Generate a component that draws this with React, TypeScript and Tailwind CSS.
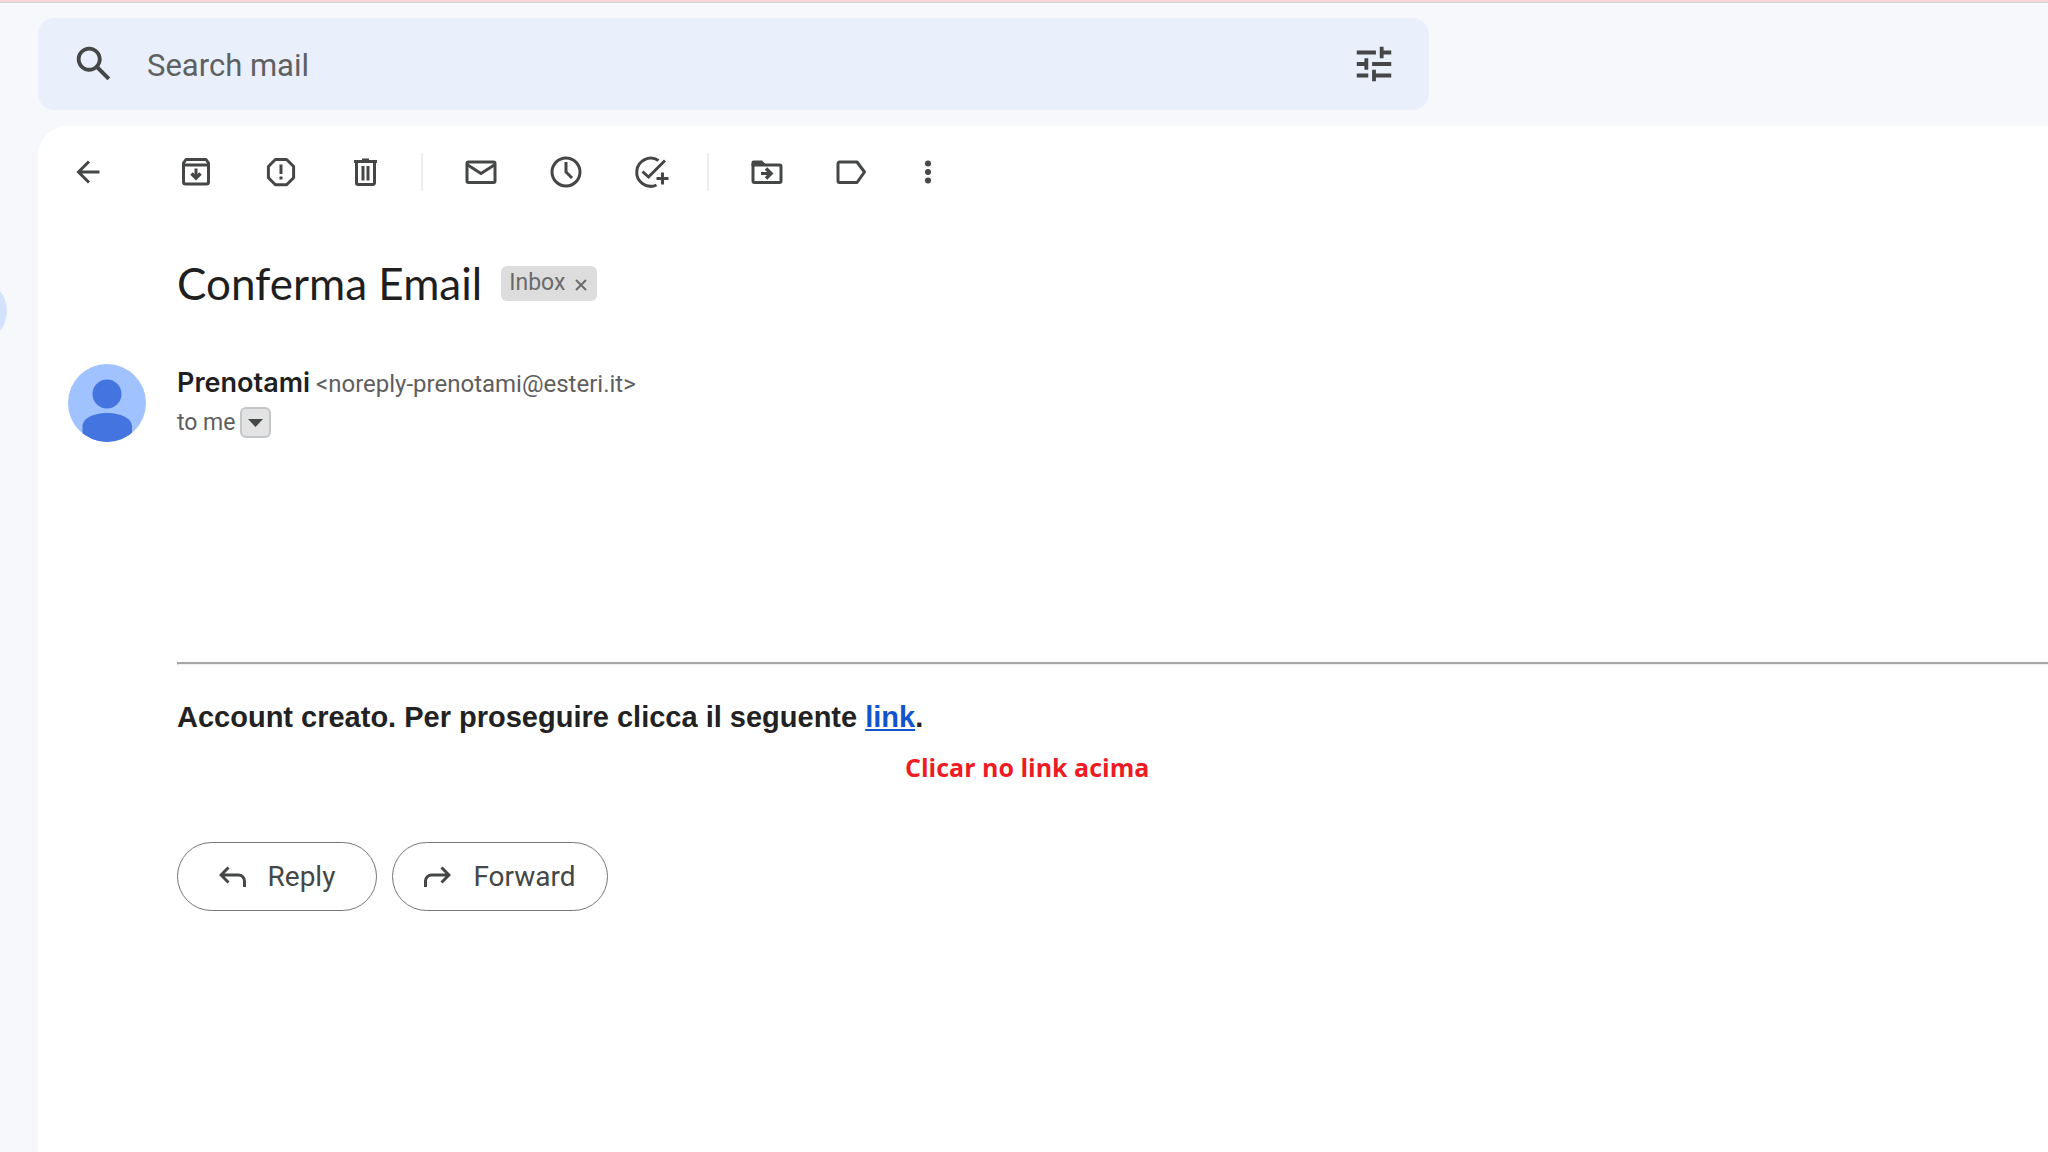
import type { ReactNode } from "react";

function Icon({ children, className = "size-9" }: { children: ReactNode; className?: string }) {
  return (
    <svg
      viewBox="0 0 36 36"
      className={`${className} overflow-visible`}
      fill="none"
      stroke="currentColor"
      strokeWidth="3"
      aria-hidden="true"
    >
      {children}
    </svg>
  );
}

function ToolButton({ label, children }: { label: string; children: ReactNode }) {
  return (
    <button type="button" aria-label={label} className="size-9 shrink-0">
      <Icon>{children}</Icon>
    </button>
  );
}

function Toolbar() {
  return (
    <div className="flex h-[92px] items-center pl-8">
      <ToolButton label="Back to inbox">
        <path d="M29.5 18H9M19 7.5 8.5 18 19 28.5" />
      </ToolButton>
      <div className="ml-[72px] flex gap-[49px]">
        <ToolButton label="Archive">
          <path d="M5.5 9v19a2 2 0 0 0 2 2h21a2 2 0 0 0 2-2V9l-2.5-3.500h-20z" strokeLinejoin="round" />
          <path d="M5.5 11h25M18 14.500v9" />
          <path d="M13.500 19.500 18 24l4.500-4.500" strokeWidth="3.500" />
        </ToolButton>
        <ToolButton label="Report spam">
          <path d="M12.400 5.500h11.200l7 7v11.200l-7 7H12.400l-7-7V12.500z" strokeLinejoin="round" />
          <path d="M18 10.500v9.500M18 22.500v3" />
        </ToolButton>
        <ToolButton label="Delete">
          <path d="M6 7.500h23M8.500 9v20a1.500 1.500 0 0 0 1.500 1.500h15a1.500 1.500 0 0 0 1.500-1.500V9M14 6h7M15 12v14.500M20 12v14.500" />
        </ToolButton>
      </div>
      <div className="ml-[37px] h-[38px] w-0.5 bg-[#eceff1]" />
      <div className="ml-10 flex gap-[49px]">
        <ToolButton label="Mark as unread">
          <rect x="4" y="8" width="28" height="20.500" rx="1.500" />
          <path d="m4 10.500 14 9 14-9" />
        </ToolButton>
        <ToolButton label="Snooze">
          <circle cx="18" cy="18" r="14" strokeWidth="3" />
          <path d="M18 8v10l6 6" />
        </ToolButton>
        <ToolButton label="Add to tasks">
          <path d="M25.500 6.600A14 14 0 1 0 23.500 31M9.500 17.500l6 5.500L32 6.500M29.500 18.500v12M23.500 24.500h12" strokeWidth="3" />
        </ToolButton>
      </div>
      <div className="ml-[38px] h-[38px] w-0.5 bg-[#eceff1]" />
      <div className="ml-10 flex gap-[49px]">
        <ToolButton label="Move to">
          <path d="M4 10v17a1.500 1.500 0 0 0 1.500 1.500h25A1.500 1.500 0 0 0 32 27V12.500a1.500 1.500 0 0 0-1.500-1.500H4" />
          <path d="M2.500 12V8.500a2 2 0 0 1 2-2H13l5 5z" fill="currentColor" stroke="none" />
          <path d="M12 19.500h9" />
          <path d="m17 14.500 5 5-5 5" strokeWidth="3.500" />
        </ToolButton>
        <ToolButton label="Labels">
          <path d="M5.500 8H23l7.500 10L23 28.500H5.500A1.500 1.500 0 0 1 4 27V9.500A1.500 1.500 0 0 1 5.500 8z" strokeLinejoin="round" />
        </ToolButton>
      </div>
      <button type="button" aria-label="More" className="ml-10 size-9 shrink-0">
        <Icon>
          <g fill="currentColor" stroke="none">
            <circle cx="18" cy="9.500" r="3" />
            <circle cx="18" cy="18" r="3" />
            <circle cx="18" cy="26.500" r="3" />
          </g>
        </Icon>
      </button>
    </div>
  );
}

function SearchBar() {
  return (
    <form role="search" className="mr-[30.800%] flex h-[92px] items-center rounded-2xl bg-[#e9f0fb] pr-8 pl-[33px]">
      <button type="button" aria-label="Search" className="size-[46px] shrink-0">
        <svg viewBox="0 0 24 24" className="size-full" fill="currentColor" aria-hidden="true">
          <path d="M20.490 19l-5.730-5.730C15.530 12.200 16 10.910 16 9.500 16 5.910 13.090 3 9.500 3S3 5.910 3 9.500 5.910 16 9.500 16c1.410 0 2.700-.47 3.770-1.240L19 20.490 20.490 19zM5 9.500C5 7.010 7.010 5 9.500 5S14 7.010 14 9.500 11.990 14 9.500 14 5 11.990 5 9.500z" />
        </svg>
      </button>
      <input
        type="text"
        aria-label="Search mail"
        placeholder="Search mail"
        className="ml-[30px] h-12 min-w-0 flex-1 bg-transparent pt-0.5 text-[31px] text-[#5e6062] outline-none placeholder:text-[#5e6062]"
      />
      <button type="button" aria-label="Show search options" className="size-[46px] shrink-0">
        <svg viewBox="0 0 24 24" className="size-full" fill="currentColor" aria-hidden="true">
          <path d="M3 17v2h6v-2H3zM3 5v2h10V5H3zm10 16v-2h8v-2h-8v-2h-2v6h2zM7 9v2H3v2h4v2h2V9H7zm14 4v-2H11v2h10zm-6-4h2V7h4V5h-4V3h-2v6z" />
        </svg>
      </button>
    </form>
  );
}

function Message() {
  return (
    <article className="grid grid-cols-[139px_1fr] text-[#5e5e5e]">
      <header className="col-start-2 mt-9 flex h-[58px] items-center">
        <h1 className="font-[Lato,sans-serif] text-[44px] leading-[56px] text-[#1f1f1f]">Conferma Email</h1>
        <span className="ml-[19px] flex h-[35px] items-center rounded-md bg-[#dddddd] pr-2.5 pl-2 text-[23px] text-[#6b6b6b]">
          Inbox
          <button type="button" aria-label="Remove label Inbox" className="ml-2.5">
            <svg viewBox="0 0 12 12" className="mt-1 size-3" stroke="currentColor" strokeWidth="2" aria-hidden="true">
              <path d="m1 1 10 10M11 1 1 11" />
            </svg>
          </button>
        </span>
      </header>

      <svg viewBox="0 0 78 78" className="mt-[52px] ml-[30px] size-[78px]" role="img" aria-label="Prenotami">
        <defs>
          <clipPath id="avatar">
            <circle cx="39" cy="39" r="39" />
          </clipPath>
        </defs>
        <g clipPath="url(#avatar)">
          <rect width="78" height="78" fill="#a0c2ff" />
          <circle cx="39" cy="30" r="14.500" fill="#4374e0" />
          <path d="M14.500 78V62.500C14.500 54 26 49 39 49s25 5 25 13.500V78z" fill="#4374e0" />
        </g>
      </svg>
      <div className="mt-[52px]">
        <p className="flex h-[39px] items-baseline gap-1.5 whitespace-nowrap text-[24px] leading-[38px]">
          <span className="font-[Inter,sans-serif] text-[27px] font-semibold text-[#1f1f1f]">Prenotami</span>
          <span>&lt;noreply-prenotami@esteri.it&gt;</span>
        </p>
        <p className="flex h-[39px] items-center gap-1 text-[23px]">
          <span className="pt-0.5">to me</span>
          <button
            type="button"
            aria-label="Show details"
            className="flex size-[31px] items-center justify-center rounded-md border-2 border-[#c4c7ca] bg-[#e3e3e3] text-[#444746]"
          >
            <svg viewBox="0 0 15 8" className="h-2 w-[15px]" fill="currentColor" aria-hidden="true">
              <path d="M0 0h15L7.500 8z" />
            </svg>
          </button>
        </p>
      </div>

      <div className="col-start-2 mt-[220px] font-['Liberation_Sans',sans-serif]">
        <hr className="h-[3px] border-t-2 border-b border-l border-t-[#a6a6a6] border-b-[#eeeeee] border-l-[#a6a6a6]" />
        <p className="mt-8 text-[29px] leading-10 font-bold text-[#222222]">
          Account creato. Per proseguire clicca il seguente{" "}
          <a href="#link" className="text-[#1155cc] underline">link</a>.
        </p>
        <p className="ml-[728px] pt-2.5 font-['Open_Sans',sans-serif] text-[25px] leading-10 font-bold text-[#ed1c24]">
          Clicar no link acima
        </p>
      </div>

      <footer className="col-start-2 mt-[55px] flex gap-[15px] text-[28px] text-[#444746]">
        <button type="button" className="flex h-[69px] w-[200px] items-center justify-center gap-[22px] rounded-full border border-[#747775]">
          <svg viewBox="0 0 27 22" className="h-[22px] w-[27px]" fill="none" stroke="currentColor" strokeWidth="3" aria-hidden="true">
            <path d="M9.500 1.500 2 9l7.500 7.500M2 9h17.500a6 6 0 0 1 6 6v6" />
          </svg>
          Reply
        </button>
        <button type="button" className="flex h-[69px] w-[216px] items-center justify-center gap-[22px] rounded-full border border-[#747775]">
          <svg viewBox="0 0 27 22" className="h-[22px] w-[27px]" fill="none" stroke="currentColor" strokeWidth="3" aria-hidden="true">
            <path d="M17.500 1.500 25 9l-7.500 7.500M25 9H7.500a6 6 0 0 0-6 6v6" />
          </svg>
          Forward
        </button>
      </footer>
    </article>
  );
}

export default function App() {
  return (
    <div className="flex min-h-screen flex-col overflow-x-hidden bg-[#f6f8fc] font-[Roboto,sans-serif] text-[#444746]">
      <div className="h-[3px] border-b border-[#d5d3d6] bg-[#f3d6d5]" />
      <div className="flex flex-1">
        <aside className="w-[38px] shrink-0 overflow-hidden pt-[276px]">
          <a href="#inbox" aria-label="Inbox" className="-ml-[57px] block size-16 rounded-full bg-[#d3e3fd]" />
        </aside>
        <div className="flex min-w-0 flex-1 flex-col pt-[15px]">
          <SearchBar />
          <main className="mt-4 flex-1 rounded-tl-[30px] bg-white">
            <Toolbar />
            <Message />
          </main>
        </div>
      </div>
    </div>
  );
}
